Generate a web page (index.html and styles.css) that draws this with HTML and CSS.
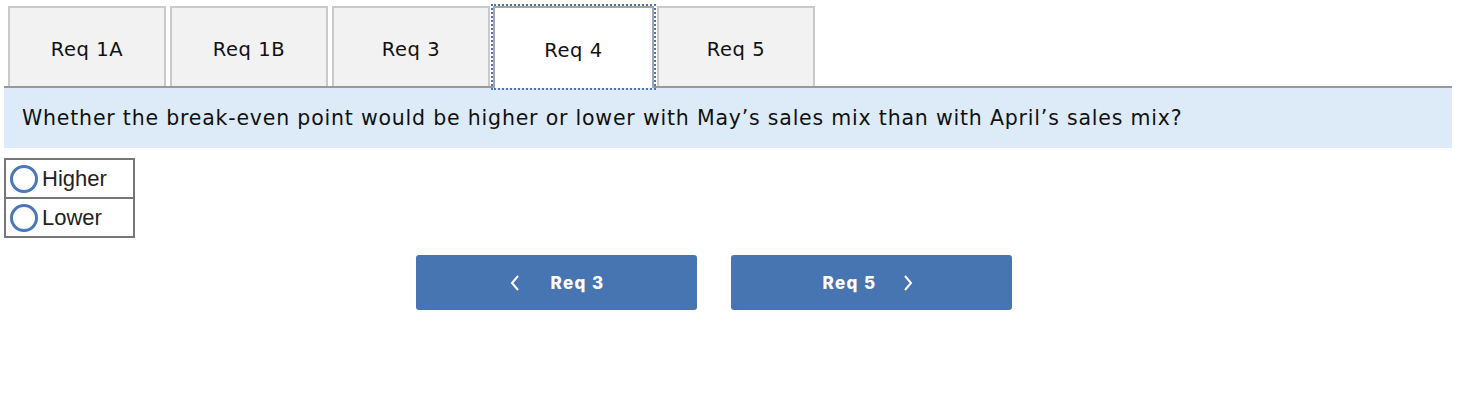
FILE: index.html
```html
<!DOCTYPE html>
<html>
<head>
<meta charset="utf-8">
<link rel="stylesheet" href="styles.css">
</head>
<body>
<div class="wrap">
  <div class="tabs">
    <div class="tab">Req 1A</div>
    <div class="tab">Req 1B</div>
    <div class="tab">Req 3</div>
    <div class="tab active">Req 4</div>
    <div class="tab">Req 5</div>
  </div>
  <div class="question">Whether the break-even point would be higher or lower with May’s sales mix than with April’s sales mix?</div>
  <div class="choices">
    <label class="choice"><span class="radio"></span>Higher</label>
    <label class="choice"><span class="radio"></span>Lower</label>
  </div>
  <div class="nav">
    <button class="navbtn prev">
      <svg class="chev" width="10" height="16" viewBox="0 0 10 16"><polyline points="8,1 2,8 8,15" fill="none" stroke="#fff" stroke-width="2"/></svg>
      <span>Req 3</span>
    </button>
    <button class="navbtn next">
      <span>Req 5</span>
      <svg class="chev" width="10" height="16" viewBox="0 0 10 16"><polyline points="2,1 8,8 2,15" fill="none" stroke="#fff" stroke-width="2"/></svg>
    </button>
  </div>
</div>
</body>
</html>
```
FILE: styles.css
```css
html, body {
  margin: 0;
  padding: 0;
  background: #fff;
}
.wrap {
  padding: 0 6px 0 4px;
}
.tabs {
  display: flex;
  gap: 4px;
  padding: 6px 0 0 4px;
  border-bottom: 2px solid #999;
}
.tab {
  box-sizing: border-box;
  width: 158px;
  height: 80px;
  border: 2px solid #c9c9c9;
  border-bottom: none;
  background: #f2f2f2;
  display: flex;
  align-items: center;
  justify-content: center;
  font-family: "DejaVu Sans", Verdana, sans-serif;
  font-size: 19.5px;
  letter-spacing: 0.6px;
  color: #111;
  padding-top: 4px;
}
.tab.active {
  width: 161px;
  height: 82px;
  margin: 0 -1px -2px -1px;
  background: #fff;
  border-color: #a6a6a6;
  outline: 2px dotted #4a76b8;
}
.question {
  background: #ddebf8;
  height: 60px;
  display: flex;
  align-items: center;
  padding-left: 18px;
  font-family: "DejaVu Sans", Verdana, sans-serif;
  font-size: 20.5px;
  letter-spacing: 0.8px;
  color: #111;
}
.choices {
  margin-top: 10px;
  width: 131px;
  box-sizing: border-box;
  border: 2px solid #777;
}
.choice {
  display: flex;
  align-items: center;
  height: 37px;
  font-family: "Liberation Sans", Arial, sans-serif;
  font-size: 22px;
  color: #222;
}
.choice + .choice {
  border-top: 2px solid #777;
}
.radio {
  box-sizing: border-box;
  width: 28px;
  height: 28px;
  border: 3px solid #4a78b8;
  border-radius: 50%;
  margin: 0 4px 0 4px;
  background: #fff;
}
.nav {
  display: flex;
  gap: 34px;
  margin: 17px 0 0 412px;
}
.navbtn {
  width: 281px;
  height: 55px;
  border: none;
  border-radius: 3px;
  background: #4775b2;
  color: #fff;
  font-family: Inter, Roboto, "Liberation Sans", sans-serif;
  font-weight: 800;
  font-size: 17px;
  letter-spacing: 1.4px;
  display: flex;
  align-items: center;
  justify-content: center;
  padding: 0;
}
.navbtn.prev { gap: 30px; padding-left: 2px; }
.navbtn.next { gap: 27px; padding-right: 7px; }
.chev { display: block; }
```
